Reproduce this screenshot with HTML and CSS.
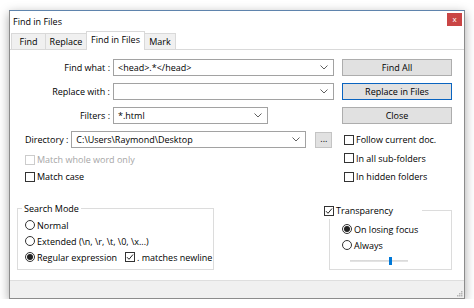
FILE: index.html
```html
<!DOCTYPE html>
<html>

<head>
    <meta charset="UTF-8">
    <meta name="viewport" content="width=device-width,initial-scale=1">
    <link rel="stylesheet" href="styles.css">
    <title>Find in Files</title>
</head>

<body>
    <div class="window">
        <div class="titlebar">
            <span class="title">Find in Files</span>
            <span class="close">x</span>
        </div>
        <div class="tabs">
            <span class="tab tab-find">Find</span>
            <span class="tab tab-replace">Replace</span>
            <span class="tab tab-files tab-active">Find in Files</span>
            <span class="tab tab-mark">Mark</span>
        </div>
        <div class="panel">
            <div class="top">
                <div class="form">
                    <div class="fields">
                        <div class="row">
                            <span class="label">Find what :</span>
                            <div class="combo combo-wide">
                                <span>&lt;head&gt;.*&lt;/head&gt;</span>
                                <svg class="chevron" width="8" height="5" viewBox="0 0 8 5"><polyline points="0.5,0.5 4,4 7.5,0.5" /></svg>
                            </div>
                        </div>
                        <div class="row">
                            <span class="label">Replace with :</span>
                            <div class="combo combo-wide">
                                <span></span>
                                <svg class="chevron" width="8" height="5" viewBox="0 0 8 5"><polyline points="0.5,0.5 4,4 7.5,0.5" /></svg>
                            </div>
                        </div>
                        <div class="row">
                            <span class="label">Filters :</span>
                            <div class="combo combo-filters">
                                <span>*.html</span>
                                <svg class="chevron" width="8" height="5" viewBox="0 0 8 5"><polyline points="0.5,0.5 4,4 7.5,0.5" /></svg>
                            </div>
                        </div>
                        <div class="row">
                            <span class="label-dir">Directory :</span>
                            <div class="combo combo-dir">
                                <span>C:\Users\Raymond\Desktop</span>
                                <svg class="chevron" width="8" height="5" viewBox="0 0 8 5"><polyline points="0.5,0.5 4,4 7.5,0.5" /></svg>
                            </div>
                            <span class="browse">...</span>
                        </div>
                    </div>
                    <div class="checks">
                        <div class="check check-disabled"><span class="box"></span>Match whole word only</div>
                        <div class="check"><span class="box"></span>Match case</div>
                    </div>
                </div>
                <div class="actions">
                    <span class="button">Find All</span>
                    <span class="button button-default">Replace in Files</span>
                    <span class="button">Close</span>
                    <div class="options">
                        <div class="check check-tall"><span class="box"></span>Follow current doc.</div>
                        <div class="check check-tall"><span class="box"></span>In all sub-folders</div>
                        <div class="check check-tall"><span class="box"></span>In hidden folders</div>
                    </div>
                </div>
            </div>
            <div class="bottom">
                <fieldset class="group group-mode">
                    <legend>Search Mode</legend>
                    <div class="radio"><span class="dot"></span>Normal</div>
                    <div class="radio"><span class="dot"></span>Extended (\n, \r, \t, \0, \x...)</div>
                    <div class="radio-line">
                        <div class="radio radio-regex"><span class="dot dot-on"></span>Regular expression</div>
                        <div class="check"><span class="box"><svg width="8" height="8" viewBox="0 0 8 8"><polyline points="1,4.2 3,6.3 7,1.5" /></svg></span>. matches newline</div>
                    </div>
                </fieldset>
                <fieldset class="group group-trans">
                    <legend>
                        <span class="check"><span class="box"><svg width="8" height="8" viewBox="0 0 8 8"><polyline points="1,4.2 3,6.3 7,1.5" /></svg></span>Transparency</span>
                    </legend>
                    <div class="radio"><span class="dot dot-on"></span>On losing focus</div>
                    <div class="radio"><span class="dot"></span>Always</div>
                    <div class="slider"><span class="thumb"></span></div>
                </fieldset>
            </div>
        </div>
        <div class="statusbar">
            <svg class="grip" width="7" height="7" viewBox="0 0 7 7">
                <rect x="5" y="1" width="1.5" height="1.5" />
                <rect x="3" y="3" width="1.5" height="1.5" />
                <rect x="5" y="3" width="1.5" height="1.5" />
                <rect x="1" y="5" width="1.5" height="1.5" />
                <rect x="3" y="5" width="1.5" height="1.5" />
                <rect x="5" y="5" width="1.5" height="1.5" />
            </svg>
        </div>
    </div>
</body>

</html>
```

FILE: styles.css
```css
*,
*::before,
*::after {
    box-sizing: border-box;
    padding: 0;
    margin: 0;
}

body {
    background: #fff;
    color: #000;
    font-family: "Open Sans", "Liberation Sans", sans-serif;
    font-size: 9px;
}

.window {
    display: flex;
    flex-direction: column;
    width: 456px;
    height: 289px;
    margin: 10px 0 0 9px;
    background: #fff;
    border: 1px solid #8c8c8c;
    border-top-color: #5f84ad;
    box-shadow: 0 3px 10px rgba(0, 0, 0, 0.35);
}

.titlebar {
    display: flex;
    height: 20px;
    padding-left: 3px;
    align-items: center;
}

.title {
    flex: 1;
}

.close {
    align-self: flex-start;
    width: 15px;
    height: 13px;
    margin: 2px 2px 0 0;
    background: #c94545;
    color: #fff;
    font-size: 8px;
    line-height: 12px;
    text-align: center;
}

.tabs {
    display: flex;
    height: 18px;
    padding-left: 1px;
    align-items: flex-end;
}

.tab {
    height: 16px;
    margin-right: -1px;
    background: #f0f0f0;
    border: 1px solid #d9d9d9;
    border-bottom: none;
    line-height: 15px;
    text-align: center;
}

.tab-find {
    width: 35px;
}

.tab-replace {
    width: 42px;
}

.tab-files {
    width: 59px;
}

.tab-mark {
    width: 32px;
}

.tab-active {
    position: relative;
    height: 19px;
    margin-bottom: -1px;
    background: #fff;
    line-height: 15px;
}

.panel {
    display: flex;
    flex: 1;
    flex-direction: column;
    border-top: 1px solid #d9d9d9;
}

.top {
    display: flex;
    padding-top: 9px;
}

.form {
    display: flex;
    flex-direction: column;
    padding-left: 15px;
}

.fields {
    display: flex;
    flex-direction: column;
    gap: 7px;
}

.row {
    display: flex;
    height: 17px;
    align-items: center;
    gap: 3px;
}

.label {
    width: 85px;
    text-align: right;
}

.combo {
    display: flex;
    height: 17px;
    padding: 0 5px 0 4px;
    align-items: center;
    justify-content: space-between;
    border: 1px solid #a2a2a2;
    background: #fff;
}

.combo-wide {
    width: 221px;
}

.combo-filters {
    width: 155px;
}

.combo-dir {
    width: 235px;
}

.chevron polyline {
    fill: none;
    stroke: #606060;
    stroke-width: 1;
}

.browse {
    width: 17px;
    height: 16px;
    margin-left: 6px;
    background: #e1e1e1;
    border: 1px solid #c4c4c4;
    line-height: 12px;
    text-align: center;
}

.checks {
    display: flex;
    flex-direction: column;
    margin-top: 3px;
}

.check {
    display: flex;
    height: 17px;
    align-items: center;
    gap: 2px;
}

.check-tall {
    height: 18.5px;
}

.box {
    display: flex;
    width: 10px;
    height: 10px;
    align-items: center;
    justify-content: center;
    border: 1px solid #333;
    background: #fff;
}

.box polyline {
    fill: none;
    stroke: #222;
    stroke-width: 1;
}

.check-disabled {
    color: #a6a6a6;
}

.check-disabled .box {
    border-color: #cccccc;
}

.actions {
    display: flex;
    flex-direction: column;
    width: 110px;
    margin: 0 12px 0 auto;
    gap: 7px;
}

.button {
    height: 17px;
    background: #e1e1e1;
    border: 1px solid #adadad;
    line-height: 15px;
    text-align: center;
}

.button-default {
    border-color: #0a64c0;
}

.options {
    display: flex;
    flex-direction: column;
    margin: -0.5px 0 0 2px;
}

.bottom {
    display: flex;
    margin-top: auto;
    padding: 0 12px 10px 7px;
    justify-content: space-between;
}

.group {
    border: 1px solid #dcdcdc;
    padding: 2px 0 0 7px;
}

.group legend {
    margin-left: -3px;
    padding: 0 2px;
    line-height: 13px;
}

.group-mode {
    width: 197px;
}

.group-trans {
    width: 123px;
    padding-left: 12px;
}

.group-trans legend {
    width: 98px;
    margin-left: -18px;
    padding: 0;
}

.radio {
    display: flex;
    height: 16px;
    align-items: center;
    gap: 2px;
}

.dot {
    display: flex;
    width: 10px;
    height: 10px;
    align-items: center;
    justify-content: center;
    border: 1px solid #333;
    border-radius: 50%;
}

.dot-on::after {
    content: "";
    width: 6px;
    height: 6px;
    border-radius: 50%;
    background: #222;
}

.radio-line {
    display: flex;
    height: 16px;
    align-items: center;
}

.radio-regex {
    width: 100px;
}

.slider {
    display: flex;
    width: 58px;
    height: 16px;
    margin-left: 8px;
    align-items: center;
    background: linear-gradient(#fff 7px, #d6d6d6 7px, #e7e7e7 9px, #fff 9px);
}

.thumb {
    width: 3px;
    height: 8px;
    margin-left: 39px;
    background: #0078d7;
}

.statusbar {
    display: flex;
    height: 18px;
    padding: 0 1px 1px 0;
    justify-content: flex-end;
    align-items: flex-end;
    background: #f0f0f0;
    border-top: 1px solid #dedede;
}

.grip rect {
    fill: #b5b5b5;
}
```
